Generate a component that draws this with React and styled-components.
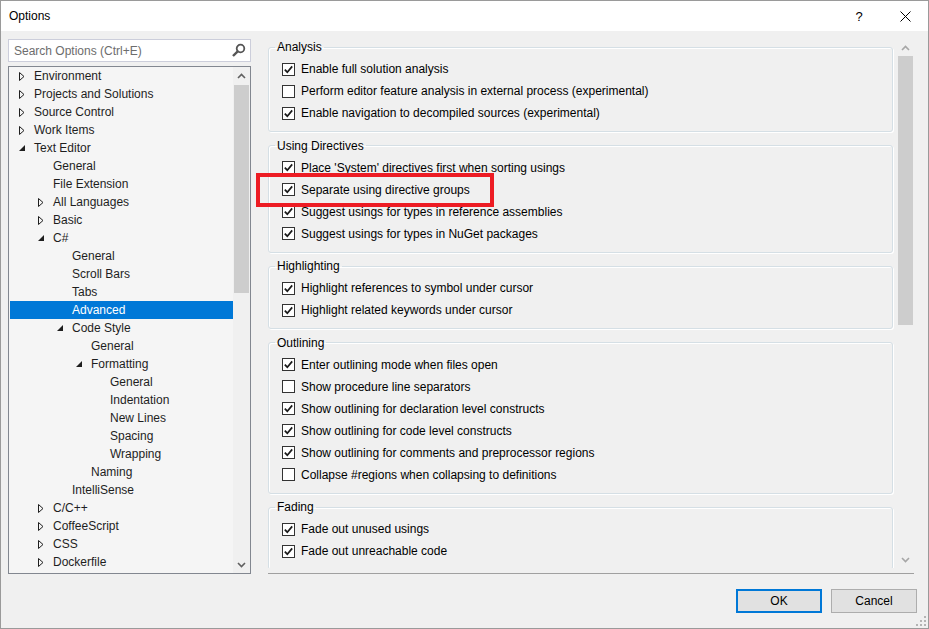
import styled, { createGlobalStyle } from 'styled-components'

const Global = createGlobalStyle`
  html, body { margin: 0; padding: 0; background: #fff; }
  * { box-sizing: border-box; }
`

const Window = styled.div`
  position: relative;
  width: 929px;
  height: 629px;
  border: 1px solid #9a9a9a;
  display: flex;
  flex-direction: column;
  font-family: "Liberation Sans", Arial, sans-serif;
  font-size: 12px;
  color: #000;
  background: #f0f0f0;
  overflow: hidden;
`
const TitleBar = styled.div`
  height: 30px;
  background: #fff;
  display: flex;
  align-items: center;
  padding-left: 8px;
  flex-shrink: 0;
`
const Title = styled.span`
  flex: 1;
  font-size: 12px;
`
const TitleButton = styled.div`
  width: 46px;
  height: 30px;
  display: flex;
  align-items: center;
  justify-content: center;
  font-size: 13px;
`
const Body = styled.div`
  flex: 1;
  display: flex;
  flex-direction: column;
  padding: 8px 0 0 7px;
`
const Main = styled.div`
  display: flex;
  gap: 17px;
`
const LeftCol = styled.div`
  width: 243px;
  display: flex;
  flex-direction: column;
  gap: 4px;
`
const Search = styled.div`
  height: 23px;
  border: 1px solid #cccedb;
  background: #fff;
  display: flex;
  align-items: center;
  padding: 0 4px 0 5px;
  color: #6d6d6d;
`
const SearchText = styled.span`
  flex: 1;
`
const Tree = styled.div`
  height: 508px;
  border: 1px solid #828790;
  background: #f5f5f5;
  display: flex;
`
const TreeList = styled.div`
  flex: 1;
  padding-left: 1px;
  overflow: hidden;
  color: #1e1e1e;
`
const Row = styled.div`
  height: 18px;
  display: flex;
  align-items: center;
  padding-left: ${p => p.$level * 19}px;
  background: ${p => (p.$selected ? '#0078d7' : 'transparent')};
  color: ${p => (p.$selected ? '#fff' : 'inherit')};
  white-space: nowrap;
`
const Expander = styled.span`
  width: 24px;
  display: flex;
  align-items: center;
  justify-content: center;
`
const VScroll = styled.div`
  width: 17px;
  display: flex;
  flex-direction: column;
  background: #f0f0f0;
  flex-shrink: 0;
`
const Arrow = styled.div`
  height: 17px;
  display: flex;
  align-items: center;
  justify-content: center;
  flex-shrink: 0;
`
const Thumb = styled.div`
  height: ${p => p.$h}px;
  margin: ${p => p.$top}px 1px 0 1px;
  background: #cdcdcd;
`
const Track = styled.div`
  flex: 1;
`
const RightPanel = styled.div`
  width: 646px;
  height: 535px;
  border-bottom: 1px solid #a0a0a0;
  padding-bottom: 5px;
  display: flex;
`
const Content = styled.div`
  flex: 1;
  overflow: hidden;
`
const Group = styled.fieldset`
  width: 625px;
  margin: 0 0 5.6px 0;
  padding: 3px 0 7px 13px;
  border: 1px solid #d5dfe5;
  border-radius: 3px;
  box-shadow: inset 1px 1px 0 #fff, 1px 1px 0 #fff;
  min-width: 0;
`
const Legend = styled.legend`
  padding: 0 2px;
  margin-left: -7px;
  line-height: 16px;
  height: 16px;
`
const Check = styled.div`
  height: 22px;
  display: flex;
  align-items: center;
  gap: 6px;
  white-space: nowrap;
`
const Box = styled.span`
  width: 13px;
  height: 13px;
  border: 1px solid #333;
  background: #fff;
  display: flex;
  align-items: center;
  justify-content: center;
  flex-shrink: 0;
`
const Footer = styled.div`
  display: flex;
  justify-content: flex-end;
  gap: 9px;
  padding: 15px 11px 0 0;
`
const Button = styled.div`
  width: 86px;
  height: 24px;
  display: flex;
  align-items: center;
  justify-content: center;
  background: #e1e1e1;
  border: ${p => (p.$default ? '2px solid #0078d7' : '1px solid #adadad')};
`
const Grip = styled.svg`
  position: absolute;
  right: 2px;
  bottom: 2px;
`
const Highlight = styled.div`
  position: absolute;
  left: 255px;
  top: 172px;
  width: 238px;
  height: 34px;
  border: 4px solid #ed1c24;
`

const Collapsed = () => (
  <svg width="6" height="9" viewBox="0 0 6 9">
    <polygon points="0.5,0.5 5,4.5 0.5,8.5" fill="none" stroke="#1e1e1e" strokeWidth="1" />
  </svg>
)
const Expanded = () => (
  <svg width="6" height="6" viewBox="0 0 6 6">
    <polygon points="6,0 6,6 0,6" fill="#1e1e1e" />
  </svg>
)
const Chevron = ({ up, color }) => (
  <svg width="9" height="6" viewBox="0 0 9 6">
    <polyline
      points={up ? '1,5 4.5,1.5 8,5' : '1,1 4.5,4.5 8,1'}
      fill="none"
      stroke={color}
      strokeWidth="1.6"
    />
  </svg>
)
const Tick = () => (
  <svg width="11" height="11" viewBox="0 0 11 11">
    <polyline points="1.8,5.6 4.3,8.2 9.2,2.4" fill="none" stroke="#1a1a1a" strokeWidth="1.7" />
  </svg>
)

const tree = [
  [0, 'Environment', 'c'],
  [0, 'Projects and Solutions', 'c'],
  [0, 'Source Control', 'c'],
  [0, 'Work Items', 'c'],
  [0, 'Text Editor', 'e'],
  [1, 'General'],
  [1, 'File Extension'],
  [1, 'All Languages', 'c'],
  [1, 'Basic', 'c'],
  [1, 'C#', 'e'],
  [2, 'General'],
  [2, 'Scroll Bars'],
  [2, 'Tabs'],
  [2, 'Advanced', null, true],
  [2, 'Code Style', 'e'],
  [3, 'General'],
  [3, 'Formatting', 'e'],
  [4, 'General'],
  [4, 'Indentation'],
  [4, 'New Lines'],
  [4, 'Spacing'],
  [4, 'Wrapping'],
  [3, 'Naming'],
  [2, 'IntelliSense'],
  [1, 'C/C++', 'c'],
  [1, 'CoffeeScript', 'c'],
  [1, 'CSS', 'c'],
  [1, 'Dockerfile', 'c'],
]

const groups = [
  {
    title: 'Analysis',
    items: [
      ['Enable full solution analysis', true],
      ['Perform editor feature analysis in external process (experimental)', false],
      ['Enable navigation to decompiled sources (experimental)', true],
    ],
  },
  {
    title: 'Using Directives',
    items: [
      ["Place 'System' directives first when sorting usings", true],
      ['Separate using directive groups', true],
      ['Suggest usings for types in reference assemblies', true],
      ['Suggest usings for types in NuGet packages', true],
    ],
  },
  {
    title: 'Highlighting',
    items: [
      ['Highlight references to symbol under cursor', true],
      ['Highlight related keywords under cursor', true],
    ],
  },
  {
    title: 'Outlining',
    items: [
      ['Enter outlining mode when files open', true],
      ['Show procedure line separators', false],
      ['Show outlining for declaration level constructs', true],
      ['Show outlining for code level constructs', true],
      ['Show outlining for comments and preprocessor regions', true],
      ['Collapse #regions when collapsing to definitions', false],
    ],
  },
  {
    title: 'Fading',
    items: [
      ['Fade out unused usings', true],
      ['Fade out unreachable code', true],
    ],
  },
]

const App = () => (
  <>
    <Global />
    <Window>
      <TitleBar>
        <Title>Options</Title>
        <TitleButton>?</TitleButton>
        <TitleButton>
          <svg width="11" height="11" viewBox="0 0 11 11">
            <path d="M0.5 0.5 L10.5 10.5 M10.5 0.5 L0.5 10.5" stroke="#000" strokeWidth="1" />
          </svg>
        </TitleButton>
      </TitleBar>
      <Body>
        <Main>
          <LeftCol>
            <Search>
              <SearchText>Search Options (Ctrl+E)</SearchText>
              <svg width="15" height="15" viewBox="0 0 15 15">
                <circle cx="9.5" cy="5.5" r="3.8" fill="none" stroke="#555" strokeWidth="1.8" />
                <line x1="6.7" y1="8.3" x2="2" y2="13" stroke="#555" strokeWidth="2.4" />
              </svg>
            </Search>
            <Tree>
              <TreeList>
                {tree.map(([level, label, exp, selected], i) => (
                  <Row key={i} $level={level} $selected={selected}>
                    <Expander>
                      {exp === 'c' && <Collapsed />}
                      {exp === 'e' && <Expanded />}
                    </Expander>
                    {label}
                  </Row>
                ))}
              </TreeList>
              <VScroll>
                <Arrow><Chevron up color="#606060" /></Arrow>
                <Thumb $top={1} $h={208} />
                <Track />
                <Arrow><Chevron color="#606060" /></Arrow>
              </VScroll>
            </Tree>
          </LeftCol>
          <RightPanel>
            <Content>
              {groups.map(g => (
                <Group key={g.title}>
                  <Legend>{g.title}</Legend>
                  {g.items.map(([text, on]) => (
                    <Check key={text}>
                      <Box>{on && <Tick />}</Box>
                      {text}
                    </Check>
                  ))}
                </Group>
              ))}
            </Content>
            <VScroll>
              <Arrow><Chevron up color="#a6a6a6" /></Arrow>
              <Thumb $top={0} $h={269} />
              <Track />
              <Arrow><Chevron color="#a6a6a6" /></Arrow>
            </VScroll>
          </RightPanel>
        </Main>
        <Footer>
          <Button $default>OK</Button>
          <Button>Cancel</Button>
        </Footer>
      </Body>
      <Grip width="10" height="10" viewBox="0 0 10 10">
        {[[8, 0], [8, 4], [4, 4], [8, 8], [4, 8], [0, 8]].map(([x, y]) => (
          <rect key={`${x}-${y}`} x={x} y={y} width="2" height="2" fill="#b4b4b4" />
        ))}
      </Grip>
      <Highlight />
    </Window>
  </>
)

export default App
